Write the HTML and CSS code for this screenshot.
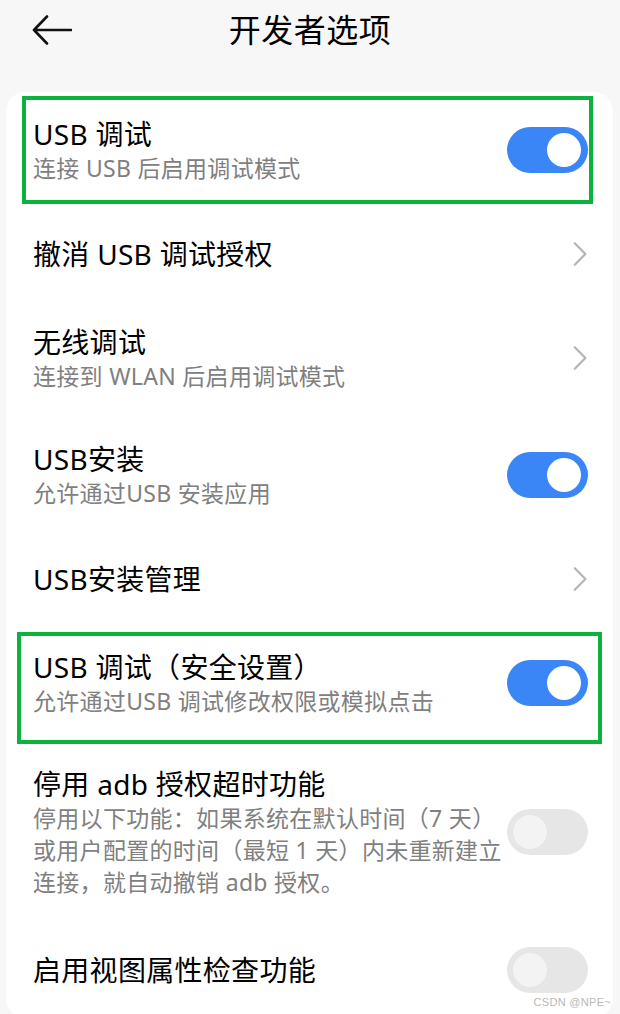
FILE: index.html
```html
<!DOCTYPE html>
<html lang="zh-CN">
<head>
<meta charset="utf-8">
<title>开发者选项</title>
<link rel="stylesheet" href="styles.css">
</head>
<body>
<div class="screen">
  <header class="topbar">
    <div class="back">
      <svg width="40" height="30" viewBox="0 0 40 30" aria-hidden="true">
        <path d="M15 1.5 L2 15 L15 28.5 M2 15 H39" fill="none" stroke="#111" stroke-width="2.6" stroke-linecap="round" stroke-linejoin="round"/>
      </svg>
    </div>
    <h1 class="page-title">开发者选项</h1>
    <div></div>
  </header>

  <section class="card">
    <div class="row">
      <div class="text">
        <div class="title">USB 调试</div>
        <div class="sub">连接 USB 后启用调试模式</div>
      </div>
      <span class="switch on"><span class="knob"></span></span>
      <span class="mark mark-a"></span>
    </div>

    <div class="row">
      <div class="text">
        <div class="title">撤消 USB 调试授权</div>
      </div>
      <svg class="chev" width="14" height="24" viewBox="0 0 14 24" aria-hidden="true">
        <path d="M1.8 1.2 L12.4 12 L1.8 22.8" fill="none" stroke="#b4b4b4" stroke-width="2.2" stroke-linecap="round" stroke-linejoin="round"/>
      </svg>
    </div>

    <div class="row">
      <div class="text">
        <div class="title">无线调试</div>
        <div class="sub">连接到 WLAN 后启用调试模式</div>
      </div>
      <svg class="chev" width="14" height="24" viewBox="0 0 14 24" aria-hidden="true">
        <path d="M1.8 1.2 L12.4 12 L1.8 22.8" fill="none" stroke="#b4b4b4" stroke-width="2.2" stroke-linecap="round" stroke-linejoin="round"/>
      </svg>
    </div>

    <div class="row">
      <div class="text">
        <div class="title">USB安装</div>
        <div class="sub">允许通过USB 安装应用</div>
      </div>
      <span class="switch on"><span class="knob"></span></span>
    </div>

    <div class="row">
      <div class="text">
        <div class="title">USB安装管理</div>
      </div>
      <svg class="chev" width="14" height="24" viewBox="0 0 14 24" aria-hidden="true">
        <path d="M1.8 1.2 L12.4 12 L1.8 22.8" fill="none" stroke="#b4b4b4" stroke-width="2.2" stroke-linecap="round" stroke-linejoin="round"/>
      </svg>
    </div>

    <div class="row">
      <div class="text">
        <div class="title">USB 调试（安全设置）</div>
        <div class="sub">允许通过USB 调试修改权限或模拟点击</div>
      </div>
      <span class="switch on"><span class="knob"></span></span>
      <span class="mark mark-b"></span>
    </div>

    <div class="row">
      <div class="text">
        <div class="title">停用 adb 授权超时功能</div>
        <div class="sub nowrap">停用以下功能：如果系统在默认时间（7 天）<br>或用户配置的时间（最短 1 天）内未重新建立<br>连接，就自动撤销 adb 授权。</div>
      </div>
      <span class="switch"><span class="knob"></span></span>
    </div>

    <div class="row">
      <div class="text">
        <div class="title">启用视图属性检查功能</div>
      </div>
      <span class="switch"><span class="knob"></span></span>
    </div>
  </section>

  <div class="watermark">CSDN @NPE~</div>
</div>
</body>
</html>
```

FILE: styles.css
```css
html, body {
  margin: 0;
  padding: 0;
}

body {
  background: #f7f7f7;
  font-family: "Noto Sans", "Noto Sans CJK SC", sans-serif;
  color: #000;
}

.screen {
  position: relative;
  width: 620px;
  height: 1014px;
  overflow: hidden;
  background: #f7f7f7;
}

.topbar {
  display: grid;
  grid-template-columns: 1fr auto 1fr;
  align-items: center;
  height: 58px;
}

.back {
  display: flex;
  align-items: center;
  padding-left: 32px;
  padding-top: 1px;
}

.back svg {
  display: block;
}

.page-title {
  margin: 0;
  font-size: 32px;
  font-weight: 400;
  line-height: 40px;
  letter-spacing: 0.5px;
  padding-top: 1px;
}

.card {
  margin: 34px 7px 0 6px;
  background: #fff;
  border-radius: 20px;
}

.row {
  position: relative;
  display: flex;
  align-items: center;
  box-sizing: border-box;
  min-height: 91px;
  padding: 24px 25px 25px 27px;
}

.text {
  flex: 1;
  min-width: 0;
}

.title {
  font-size: 28px;
  line-height: 36px;
  letter-spacing: 0.3px;
  color: #000;
}

.sub {
  font-size: 23px;
  line-height: 32px;
  letter-spacing: 0.3px;
  color: #808080;
}

.nowrap {
  white-space: nowrap;
}

.chev {
  display: block;
  margin-right: 1px;
  flex: none;
}

.switch {
  position: relative;
  flex: none;
  width: 81px;
  height: 46px;
  border-radius: 23px;
  background: #e6e6e6;
}

.switch .knob {
  position: absolute;
  top: 6px;
  left: 6px;
  width: 34px;
  height: 34px;
  border-radius: 50%;
  background: #f3f3f3;
}

.switch.on {
  background: #3a86f6;
}

.switch.on .knob {
  left: auto;
  right: 7px;
  background: #fff;
}

.mark {
  position: absolute;
  box-sizing: border-box;
  border: 4px solid #0bb23e;
  pointer-events: none;
}

.mark-a {
  left: 16px;
  top: 4px;
  width: 571px;
  height: 108px;
}

.mark-b {
  left: 11px;
  top: 7px;
  width: 585px;
  height: 112px;
}

.watermark {
  position: absolute;
  right: 9px;
  bottom: 6px;
  font-family: "Liberation Sans", "Noto Sans CJK SC", sans-serif;
  font-size: 11px;
  line-height: 12px;
  color: #b8b8b8;
  letter-spacing: 0.3px;
}
```
